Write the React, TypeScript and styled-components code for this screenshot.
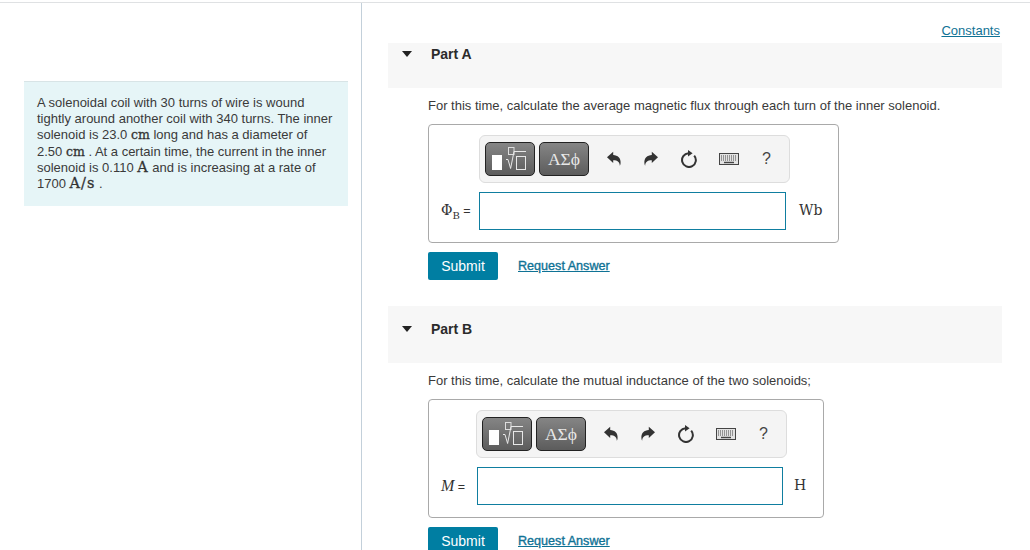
import styled, { createGlobalStyle } from 'styled-components';

const GlobalStyle = createGlobalStyle`
  html, body {
    margin: 0;
    height: 550px;
    overflow: hidden;
    background: #ffffff;
  }
  body {
    font-family: "Liberation Sans", Arial, sans-serif;
    font-size: 13px;
    color: #333333;
  }
`;

function UndoIcon({ flip }: { flip?: boolean }) {
  return (
    <svg width='16' height='16' viewBox='0 0 16 16' style={flip ? { transform: 'scaleX(-1)' } : undefined}>
      <path d='M1 6.2 7.2 0.8V4C11.8 4.2 15 7 14.6 12.2c-.1 1-.4 1.9-.8 2.6.1-3.6-2.2-5.6-6.6-5.6v2.8z' fill='#333' />
    </svg>
  );
}

function ResetIcon() {
  return (
    <svg width='18' height='18' viewBox='0 0 18 18'>
      <path d='M8.5 3.2A6.9 6.9 0 1 0 14.2 5.6' fill='none' stroke='#333' strokeWidth='2' />
      <path d='M8 0v6.4L12.6 3.2z' fill='#333' />
    </svg>
  );
}

function KeyboardIcon() {
  return (
    <svg width='20' height='12' viewBox='0 0 20 12'>
      <rect x='0.5' y='0.5' width='19' height='11' fill='#e2e2e2' stroke='#444' />
      <path d='M2 3h16M2 5h16M2 7h16' stroke='#444' strokeWidth='1' strokeDasharray='1 1' />
      <path d='M5 9.5h10' stroke='#444' strokeWidth='1.4' />
    </svg>
  );
}

function TemplatesGlyph() {
  return (
    <svg width='42' height='26' viewBox='0 0 42 26'>
      <rect x='3' y='9' width='10' height='15' fill='#ffffff' />
      <rect x='19.5' y='1.5' width='5.5' height='7' fill='none' stroke='#dddddd' />
      <path d='M17 13.5h2l2.6 9 3.4-17h12' fill='none' stroke='#e8e8e8' />
      <rect x='27.5' y='10.5' width='9' height='13' fill='none' stroke='#e8e8e8' />
    </svg>
  );
}

type PartProps = {
  title: string;
  prompt: string;
  symbol: React.ReactNode;
  unit: string;
  unitGap: number;
  tall?: boolean;
  boxWidth: number;
  symbolWidth: number;
  fieldWidth: number;
  toolbarOffset: number;
};

function Part({ title, prompt, symbol, unit, unitGap, tall, boxWidth, symbolWidth, fieldWidth, toolbarOffset }: PartProps) {
  return (
    <PartSection>
      <PartHeader $tall={tall}>
        <Caret />
        <PartTitle>{title}</PartTitle>
      </PartHeader>
      <PartBody>
        <Prompt>{prompt}</Prompt>
        <AnswerBox $width={boxWidth}>
          <Toolbar $offset={toolbarOffset}>
            <MathButton>
              <TemplatesGlyph />
            </MathButton>
            <MathButton>ΑΣϕ</MathButton>
            <ToolIcons>
              <UndoIcon />
              <UndoIcon flip />
              <ResetIcon />
              <KeyboardIcon />
              <Help>?</Help>
            </ToolIcons>
          </Toolbar>
          <AnswerRow>
            <Symbol $width={symbolWidth}>
              {symbol}
              <Equals> =</Equals>
            </Symbol>
            <Field $width={fieldWidth} />
            <Unit $gap={unitGap}>{unit}</Unit>
          </AnswerRow>
        </AnswerBox>
        <Actions>
          <SubmitButton>Submit</SubmitButton>
          <RequestLink href='#'>Request Answer</RequestLink>
        </Actions>
      </PartBody>
    </PartSection>
  );
}

export default function App() {
  return (
    <>
      <GlobalStyle />
      <Page>
        <Sidebar>
          <Intro>
            A solenoidal coil with 30 turns of wire is wound tightly around another coil with 340 turns. The inner
            solenoid is 23.0 <MathText>cm</MathText> long and has a diameter of 2.50 <MathText>cm</MathText> . At a
            certain time, the current in the inner solenoid is 0.110 <MathText $big>A</MathText> and is increasing at a
            rate of 1700 <MathText $big>A/s</MathText> .
          </Intro>
        </Sidebar>
        <Main>
          <ConstantsRow>
            <ConstantsLink href='#'>Constants</ConstantsLink>
          </ConstantsRow>
          <Part
            title='Part A'
            prompt='For this time, calculate the average magnetic flux through each turn of the inner solenoid.'
            symbol={<>Φ<sub>B</sub></>}
            unit='Wb'
            unitGap={13}
            boxWidth={411}
            symbolWidth={38}
            fieldWidth={307}
            toolbarOffset={50}
          />
          <Part
            tall
            title='Part B'
            prompt='For this time, calculate the mutual inductance of the two solenoids;'
            symbol={<i>M</i>}
            unit='H'
            unitGap={11}
            boxWidth={396}
            symbolWidth={36}
            fieldWidth={306}
            toolbarOffset={47}
          />
        </Main>
      </Page>
    </>
  );
}

const Page = styled.div`
  display: flex;
  height: 548px;
  margin-top: 2px;
  border-top: 1px solid #dfe1e3;
  overflow: hidden;
`;

const Sidebar = styled.aside`
  width: 362px;
  flex: none;
  box-sizing: border-box;
  padding: 78px 13px 0 24px;
  border-right: 1px solid #c3d0da;
`;

const Intro = styled.div`
  box-sizing: border-box;
  height: 125px;
  padding: 13px 13px 0;
  background: #e6f5f7;
  border-top: 1px solid #d8e4e6;
  line-height: 16.2px;
  color: #3a3a3a;
`;

const MathText = styled.span<{ $big?: boolean }>`
  font-family: "DejaVu Serif", "Liberation Serif", serif;
  font-size: ${(p) => (p.$big ? 14.5 : 12.5)}px;
  line-height: 1;
  letter-spacing: ${(p) => (p.$big ? 1 : 0)}px;
  color: #333333;
  -webkit-text-stroke: 0.3px #333333;
`;

const Main = styled.main`
  flex: 1;
  min-width: 0;
  padding: 0 28px 0 26px;
`;

const ConstantsRow = styled.div`
  display: flex;
  justify-content: flex-end;
  height: 40px;
  align-items: flex-end;
`;

const ConstantsLink = styled.a`
  color: #0f7295;
  text-decoration: underline;
  line-height: 14px;
  margin: 0 2px 5px 0;
`;

const PartSection = styled.section`
  margin-bottom: 26px;
`;

const PartHeader = styled.div<{ $tall?: boolean }>`
  display: flex;
  align-items: flex-start;
  box-sizing: border-box;
  height: ${(p) => (p.$tall ? 57 : 45)}px;
  padding: ${(p) => (p.$tall ? 16 : 4)}px 0 0 14px;
  background: #f7f7f7;
`;

const Caret = styled.span`
  width: 0;
  height: 0;
  margin: 4px 19px 0 0;
  border-left: 5.5px solid transparent;
  border-right: 5.5px solid transparent;
  border-top: 6px solid #222222;
`;

const PartTitle = styled.h3`
  margin: 0;
  font-size: 14px;
  line-height: 14px;
  font-weight: bold;
  color: #2b2b2b;
`;

const PartBody = styled.div`
  padding-left: 40px;
`;

const Prompt = styled.p`
  margin: 0;
  padding-top: 11px;
  height: 25px;
  line-height: 14px;
  color: #3a3a3a;
`;

const AnswerBox = styled.div<{ $width: number }>`
  box-sizing: border-box;
  width: ${(p) => p.$width}px;
  height: 119px;
  padding-top: 10px;
  border: 1px solid #a9a9a9;
  border-radius: 4px;
`;

const Toolbar = styled.div<{ $offset: number }>`
  display: flex;
  align-items: center;
  box-sizing: border-box;
  width: 311px;
  height: 48px;
  margin-left: ${(p) => p.$offset}px;
  padding-left: 5px;
  background: #f4f4f4;
  border: 1px solid #dddddd;
  border-radius: 6px;
  gap: 4px;
`;

const MathButton = styled.div`
  display: flex;
  align-items: center;
  justify-content: center;
  box-sizing: border-box;
  width: 50px;
  height: 34px;
  border: 1px solid #222222;
  border-radius: 5px;
  background: linear-gradient(#858585, #5c5c5c);
  font-family: "Liberation Serif", serif;
  font-size: 17.5px;
  color: #e8e8e8;
`;

const ToolIcons = styled.div`
  display: flex;
  align-items: center;
  gap: 21px;
  flex: 1;
  padding-left: 13px;
`;

const Help = styled.span`
  margin-left: 2px;
  font-size: 16px;
  color: #444444;
`;

const AnswerRow = styled.div`
  display: flex;
  align-items: center;
  margin-top: 9px;
  padding-left: 12px;
`;

const Symbol = styled.span<{ $width: number }>`
  flex: none;
  width: ${(p) => p.$width}px;
  white-space: nowrap;
  font-family: "DejaVu Serif", "Liberation Serif", serif;
  font-size: 14px;
  color: #333333;
  i {
    font-family: "Liberation Serif", serif;
    font-size: 16px;
  }
  sub {
    font-size: 10px;
  }
`;

const Equals = styled.span`
  font-family: "Liberation Sans", sans-serif;
  font-size: 12.5px;
`;

const Field = styled.div<{ $width: number }>`
  flex: none;
  box-sizing: border-box;
  width: ${(p) => p.$width}px;
  height: 38px;
  border: 1px solid #0f7ea0;
  background: #ffffff;
`;

const Unit = styled.span<{ $gap: number }>`
  flex: none;
  padding: 0 0 3px ${(p) => p.$gap}px;
  font-family: "DejaVu Serif", "Liberation Serif", serif;
  font-size: 14px;
  color: #333333;
`;

const Actions = styled.div`
  display: flex;
  align-items: center;
  gap: 20px;
  margin-top: 9px;
`;

const SubmitButton = styled.button`
  width: 70px;
  height: 28px;
  padding: 0;
  border: none;
  border-radius: 2px;
  background: #007ea2;
  color: #ffffff;
  font-family: "Liberation Sans", sans-serif;
  font-size: 14px;
`;

const RequestLink = styled.a`
  margin-bottom: 1px;
  color: #0f7295;
  font-size: 12.6px;
  text-decoration: underline;
  -webkit-text-stroke: 0.35px #0f7295;
`;
